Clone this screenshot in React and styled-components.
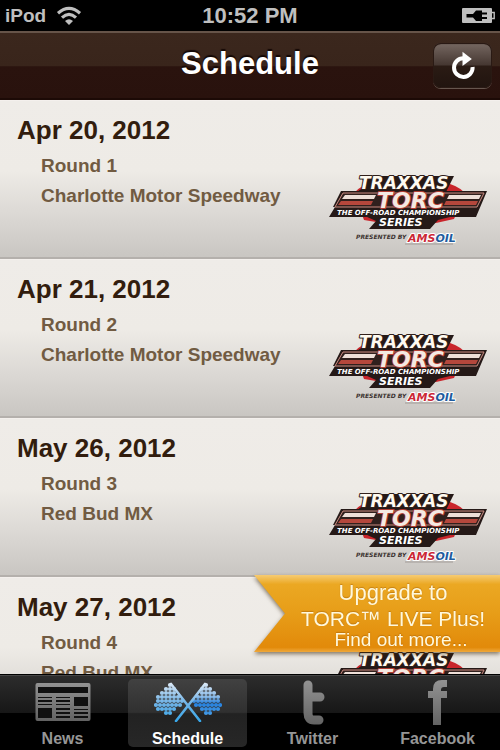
import React from "react";
import styled, { createGlobalStyle } from "styled-components";

const GlobalStyle = createGlobalStyle`
  * { box-sizing: border-box; }
  body {
    margin: 0;
    background: #000;
    font-family: "Liberation Sans", Arial, Helvetica, sans-serif;
  }
  button { font-family: inherit; border: 0; padding: 0; cursor: pointer; }
  h1, h2, p, ul { margin: 0; padding: 0; }
`;

const Screen = styled.div`
  height: 100vh;
  display: flex;
  flex-direction: column;
  overflow: hidden;
`;

const StatusBar = styled.div`
  flex: none;
  height: 31px;
  padding: 0 5px;
  display: grid;
  grid-template-columns: 1fr auto 1fr;
  align-items: center;
  background: #000;
  color: #bfbfbf;
`;

const Carrier = styled.div`
  display: flex;
  align-items: center;
  gap: 10px;
  font-size: 19px;
  font-weight: bold;
  line-height: 30px;
`;

const Clock = styled.div`
  font-size: 22px;
  line-height: 30px;
  font-weight: bold;
`;

const Power = styled.div`
  display: flex;
  justify-content: flex-end;
`;

const Header = styled.header`
  flex: none;
  height: 69px;
  padding: 0 8px;
  display: grid;
  grid-template-columns: 1fr auto 1fr;
  align-items: center;
  border-top: 2px solid #665449;
  border-bottom: 2px solid #1c0a06;
  background: linear-gradient(#3b271d 0, #39251b 50%, #2a130e 52%, #29120d 100%);
`;

const Title = styled.h1`
  grid-column: 2;
  padding-bottom: 3px;
  color: #fff;
  font-size: 31px;
  line-height: 36px;
  text-shadow: 0 -2px 1px #140805;
`;

const RefreshButton = styled.button`
  justify-self: end;
  width: 59px;
  height: 45px;
  display: grid;
  place-items: center;
  border-radius: 8px;
  background: linear-gradient(#766862 0, #463832 48%, #2a1b14 52%, #21140f 100%);
  box-shadow: inset 0 1px 1px #2a1a14, inset 0 0 0 1px #2b1b15, 0 1px 0 #66564e;
`;

const Content = styled.main`
  position: relative;
  flex: 1;
  min-height: 0;
`;

const EventList = styled.ul`
  height: 100%;
  overflow-y: auto;
  scrollbar-width: none;
  list-style: none;
  background: #efebe7;
`;

const EventRow = styled.li`
  height: 159px;
  padding: 13px 12px 10px 17px;
  display: flex;
  justify-content: space-between;
  border-bottom: 2px solid #b4b0ac;
  background: linear-gradient(#efece8 0, #eeebe6 45%, #dcd9d5 72%, #c9c6c2 100%);
  box-shadow: inset 0 1px 0 #f4f0ed;
`;

const EventText = styled.div`
  flex: 1;
  white-space: nowrap;
`;

const EventDate = styled.h2`
  color: #321d0e;
  font-size: 26px;
  line-height: 34px;
  margin-bottom: 4px;
`;

const EventDetail = styled.p`
  padding-left: 24px;
  color: #715b42;
  font-size: 19px;
  line-height: 30px;
  font-weight: bold;
`;

const LogoArt = styled.svg`
  flex: none;
  align-self: flex-end;
  text {
    font-family: "DejaVu Sans", Verdana, sans-serif;
    font-weight: bold;
    font-style: oblique;
    paint-order: stroke;
    stroke-linejoin: round;
  }
`;

const Banner = styled.button`
  position: absolute;
  right: 0;
  bottom: 22px;
  width: 246px;
  height: 77px;
  padding-left: 32px;
  background: none;
  color: #fff8dc;
  filter: drop-shadow(0 2px 2px rgba(60, 40, 10, 0.6));
`;

const Ribbon = styled.span`
  position: absolute;
  inset: 0;
  background: linear-gradient(#f6cb72 0, #eba823 12%, #e79d18 50%, #e28a0a 94%, #efa83c 100%);
  clip-path: polygon(0 0, 100% 0, 100% 100%, 0 100%, 31px 50%);
`;

const BannerLine = styled.span`
  position: relative;
  display: block;
  padding-left: ${(p) => p.$indent || 0}px;
  font-size: ${(p) => p.$size}px;
  line-height: ${(p) => p.$line}px;
  white-space: nowrap;
  text-shadow: 0 -1px 1px rgba(160, 90, 0, 0.5);
`;

const TabBar = styled.nav`
  flex: none;
  height: 76px;
  padding: 4px 0 3px;
  display: grid;
  grid-template-columns: repeat(4, 1fr);
  border-top: 1px solid #000;
  box-shadow: inset 0 1px 0 #474747;
  background: linear-gradient(#2d2d2d 0, #171717 50%, #000 51%, #000 100%);
`;

const Tab = styled.button`
  margin: 0 3px;
  display: flex;
  flex-direction: column;
  align-items: center;
  justify-content: space-between;
  border-radius: 5px;
  color: ${(p) => (p.$active ? "#fff" : "#969696")};
  background: ${(p) =>
    p.$active ? "linear-gradient(#414141 0, #303030 49%, #222 51%, #272727 100%)" : "none"};
  font-size: 16px;
  line-height: 16px;
  font-weight: bold;
  svg { display: block; }
`;

function Wifi() {
  return (
    <svg width="26" height="20" viewBox="0 0 26 20" fill="none" stroke="#bfbfbf" strokeWidth="3.2" aria-hidden="true">
      <path d="M2 7.2Q13-2.4 24 7.2" />
      <path d="M6 11.6Q13 5.3 20 11.6" />
      <path d="M9 15Q13 11.3 17 15L13 19Z" fill="#bfbfbf" stroke="none" />
    </svg>
  );
}

function Battery() {
  return (
    <svg width="33" height="17" viewBox="0 0 33 17" role="img" aria-label="Charging">
      <rect x="0" y="1" width="30" height="15" rx="1" fill="#bfbfbf" />
      <path d="M30 5.5h2.2v6H30" fill="none" stroke="#bfbfbf" strokeWidth="1.4" />
      <path d="M4.5 7H11l3-3.5H20v2h5v2h-5v2.5h5v2h-5v2h-6L11 10.5H4.5Z" fill="#000" />
    </svg>
  );
}

function RefreshIcon() {
  return (
    <svg width="26" height="29" viewBox="0 0 26 29" aria-hidden="true">
      <path d="M13.5 7.3A9.3 9.3 0 1 0 22.6 16" fill="none" stroke="#fff" strokeWidth="4" />
      <path d="M12.5.8 21.8 8 12.5 15Z" fill="#fff" />
    </svg>
  );
}

function SeriesLogo() {
  return (
    <LogoArt width="160" height="74" viewBox="0 0 160 74" role="img" aria-label="Traxxas TORC Series presented by AMSOIL">
      <path d="M26 20Q34 11 48 9H114Q130 12 137 20L126 46 108 50H54L36 47Z" fill="#c9252b" />
      <path d="M34 3H126L117 21H26L36 14Z" fill="#251917" />
      <path d="M13 18H159L148 44H1L7 34H5Z" fill="#251917" />
      <path d="M15 20H156L149 34H7Z" fill="#30201d" stroke="#c98a80" strokeWidth="1" />
      <path d="M17 22H48L46 26H14ZM121 22H153L151 26H119Z" fill="#eedfd8" />
      <path d="M13 28H45L43 32H10ZM118 28H150L148 32H116Z" fill="#b5473c" />
      <path d="M37 43H126L110 47 102 56H41L48 48Z" fill="#251917" />
      <text x="31" y="16" fontSize="17" fill="#fffaf0" stroke="#31201b" strokeWidth="2">TRAXXAS</text>
      <text x="49" y="35" fontSize="22" fill="#f4e9e2" stroke="#b13c32" strokeWidth="2">TORC</text>
      <path d="M7 36H149L144 44H3Z" fill="#251917" />
      <text x="9" y="42" fontSize="7" fill="#fff">THE OFF-ROAD CHAMPIONSHIP</text>
      <text x="51" y="53" fontSize="11" fill="#fff" stroke="#211917" strokeWidth="2">SERIES</text>
      <text x="28" y="66" fontSize="6" fill="#3d3431">PRESENTED BY</text>
      <text x="80" y="69" fontSize="11" stroke="#fff" strokeWidth="2">
        <tspan fill="#cb2836">AMS</tspan>
        <tspan fill="#205b9e">OIL</tspan>
      </text>
      <path d="M77 71H125" stroke="#a19b97" strokeWidth="1" />
    </LogoArt>
  );
}

function NewsIcon() {
  return (
    <svg width="56" height="43" viewBox="0 0 56 43" aria-hidden="true">
      <defs>
        <linearGradient id="paper" x1="0" y1="0" x2="0" y2="1">
          <stop stopColor="#929292" />
          <stop offset="1" stopColor="#626262" />
        </linearGradient>
      </defs>
      <rect x="0.5" y="4" width="55" height="38" rx="2" fill="url(#paper)" />
      <g fill="#101010">
        <path d="M3 8h50v6H3zM39 18h14v9H39zM3 29h14v10H3z" />
        <path d="M3 18h14v1H3zM3 21h14v2H3zM3 25h14v1H3zM21 18h14v1H21zM21 21h14v2H21zM21 25h14v1H21zM21 29h14v2H21zM21 33h14v2H21zM21 37h14v2H21zM39 30h14v1H39zM39 33h14v2H39zM39 37h14v2H39z" />
      </g>
    </svg>
  );
}

const flagRows = [
  [16, 2, 1], [12, 6, 3], [8, 10, 4], [4, 14, 6],
  [4, 18, 7], [2, 22, 7], [4, 26, 5], [12, 30, 2],
];

function Flag({ fill }) {
  return (
    <g>
      <g fill={fill}>
        {flagRows.map(([x, y, count]) =>
          Array.from({ length: count }, (_, i) => (
            <circle key={`${y}-${i}`} cx={x + i * 4} cy={y} r="2.1" />
          ))
        )}
      </g>
      <path d="M17 1 46 38" stroke="url(#flagBlue)" strokeWidth="2.6" strokeLinecap="round" />
    </g>
  );
}

function FlagsIcon() {
  return (
    <svg width="68" height="43" viewBox="0 0 68 43" fill="none" aria-hidden="true">
      <defs>
        <linearGradient id="flagBlue" gradientUnits="userSpaceOnUse" x1="0" y1="0" x2="0" y2="39">
          <stop stopColor="#dbe9f7" />
          <stop offset=".5" stopColor="#72b4e7" />
          <stop offset="1" stopColor="#35a6e9" />
        </linearGradient>
        <linearGradient id="flagDeep" gradientUnits="userSpaceOnUse" x1="0" y1="0" x2="0" y2="34">
          <stop stopColor="#dbe9f7" />
          <stop offset=".4" stopColor="#8dbdea" />
          <stop offset=".6" stopColor="#2682e0" />
          <stop offset="1" stopColor="#4a9fe6" />
        </linearGradient>
      </defs>
      <g transform="translate(0 4)"><Flag fill="url(#flagBlue)" /></g>
      <g transform="translate(68 4) scale(-1 1)"><Flag fill="url(#flagDeep)" /></g>
    </svg>
  );
}

function TwitterIcon() {
  return (
    <svg width="24" height="47" viewBox="0 0 24 47" fill="none" aria-hidden="true">
      <defs>
        <linearGradient id="metal" gradientUnits="userSpaceOnUse" x1="0" y1="0" x2="0" y2="47">
          <stop stopColor="#949494" />
          <stop offset="1" stopColor="#626262" />
        </linearGradient>
      </defs>
      <path d="M7 6V34Q7 41 13 41H18M7 18H19" stroke="url(#metal)" strokeWidth="9" strokeLinecap="round" />
    </svg>
  );
}

function FacebookIcon() {
  return (
    <svg width="20" height="47" viewBox="0 0 20 47" aria-hidden="true">
      <path d="M5 46V19H0V12H5V10Q5 1 14 1H19V8H16Q13 8 13 11V12H19V19H13V46Z" fill="url(#metal)" />
    </svg>
  );
}

const events = [
  { date: "Apr 20, 2012", round: "Round 1", venue: "Charlotte Motor Speedway" },
  { date: "Apr 21, 2012", round: "Round 2", venue: "Charlotte Motor Speedway" },
  { date: "May 26, 2012", round: "Round 3", venue: "Red Bud MX" },
  { date: "May 27, 2012", round: "Round 4", venue: "Red Bud MX" },
];

const tabs = [
  { label: "News", Icon: NewsIcon },
  { label: "Schedule", Icon: FlagsIcon, active: true },
  { label: "Twitter", Icon: TwitterIcon },
  { label: "Facebook", Icon: FacebookIcon },
];

export default function App() {
  return (
    <Screen>
      <GlobalStyle />
      <StatusBar>
        <Carrier>iPod <Wifi /></Carrier>
        <Clock>10:52 PM</Clock>
        <Power><Battery /></Power>
      </StatusBar>
      <Header>
        <Title>Schedule</Title>
        <RefreshButton type="button" aria-label="Refresh"><RefreshIcon /></RefreshButton>
      </Header>
      <Content>
        <EventList>
          {events.map((event) => (
            <EventRow key={event.date}>
              <EventText>
                <EventDate>{event.date}</EventDate>
                <EventDetail>{event.round}</EventDetail>
                <EventDetail>{event.venue}</EventDetail>
              </EventText>
              <SeriesLogo />
            </EventRow>
          ))}
        </EventList>
        <Banner type="button">
          <Ribbon />
          <BannerLine $size={22} $line={26}>Upgrade to</BannerLine>
          <BannerLine $size={21} $line={26}>TORC™ LIVE Plus!</BannerLine>
          <BannerLine $size={19} $line={16} $indent={16}>Find out more...</BannerLine>
        </Banner>
      </Content>
      <TabBar>
        {tabs.map(({ label, Icon, active }) => (
          <Tab key={label} type="button" $active={active} aria-current={active ? "page" : undefined}>
            <Icon />
            {label}
          </Tab>
        ))}
      </TabBar>
    </Screen>
  );
}
